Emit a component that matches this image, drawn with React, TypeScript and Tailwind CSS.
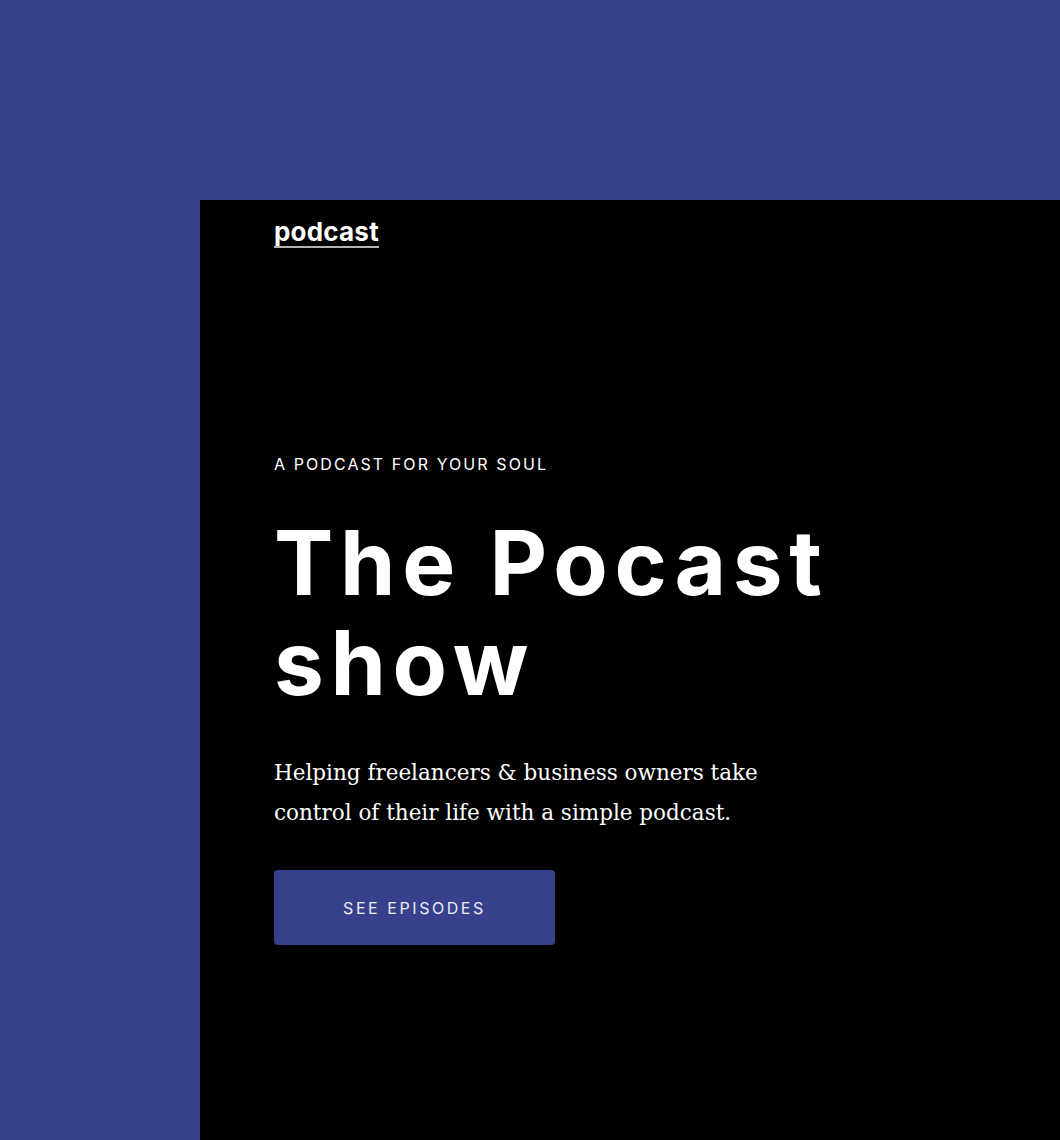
export default function App() {
  return (
    <div className="min-h-[1140px] bg-[#37408b] pl-[200px] pt-[200px]">
      <div className="h-[940px] bg-black pl-[74px] pt-[18px] text-white">
        {/* Logo */}
        <a className="inline-block border-b-2 border-white/70 font-['Inter',sans-serif] text-[26px] font-bold leading-[28px] tracking-[0.2px]">
          podcast
        </a>

        {/* Hero */}
        <div className="pt-[205px]">
          <p className="font-['Inter',sans-serif] text-[16px] leading-[22px] tracking-[0.13em]">
            A PODCAST FOR YOUR SOUL
          </p>
          <h1 className="mt-[38px] font-['Inter',sans-serif] text-[89px] font-bold leading-[100px] tracking-[0.075em]">
            The Pocast
            <br />
            show
          </h1>
          <p className="mt-[40px] w-[510px] font-['DejaVu_Serif',serif] text-[21.5px] leading-[40px]">
            Helping freelancers &amp; business owners take control of their life with a simple podcast.
          </p>
          <button className="mt-[37px] flex h-[75px] w-[281px] items-center justify-center rounded-[4px] bg-[#37408b] font-['Inter',sans-serif] text-[16px] tracking-[0.16em] text-white/90">
            SEE EPISODES
          </button>
        </div>
      </div>
    </div>
  );
}
